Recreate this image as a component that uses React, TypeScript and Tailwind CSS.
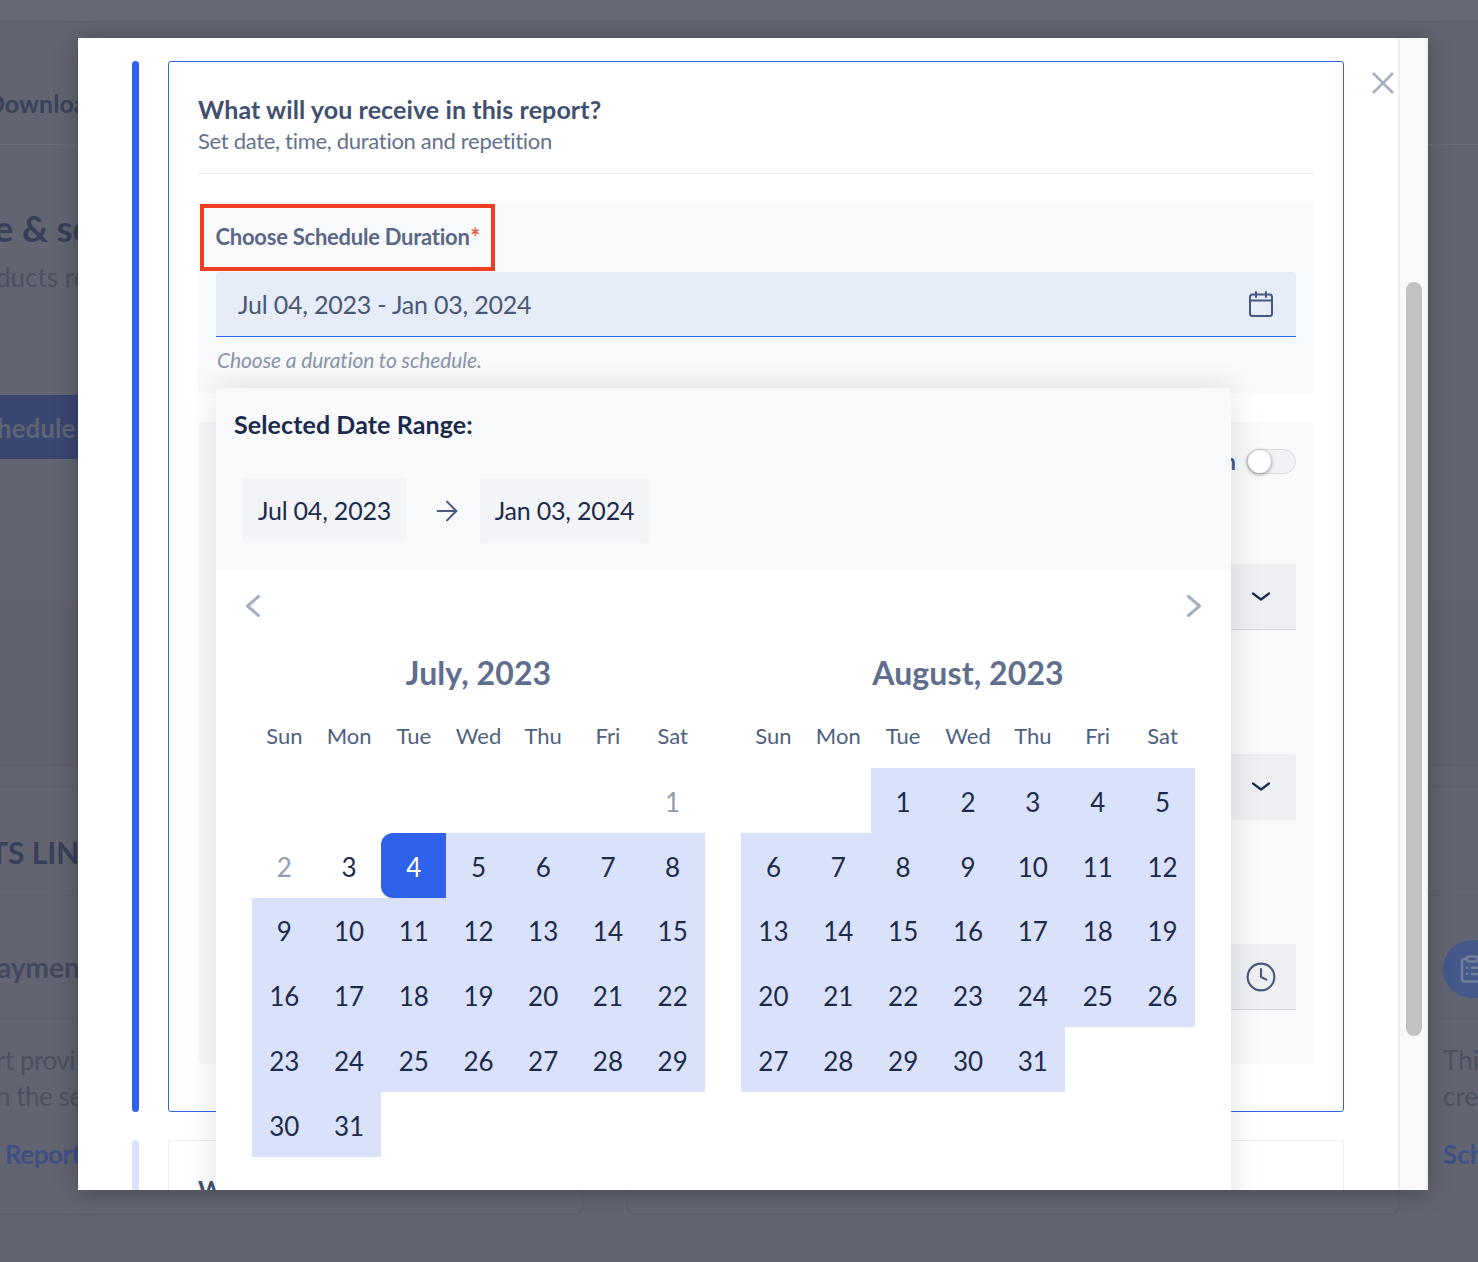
import { ArrowRight, ClipboardList, Clock } from "lucide-react";

const DAYS = ["Sun", "Mon", "Tue", "Wed", "Thu", "Fri", "Sat"];

type Month = { title: string; offset: number; length: number; rangeStart: number; mutedUntil: number };

const MONTHS: Month[] = [
  { title: "July, 2023", offset: 6, length: 31, rangeStart: 4, mutedUntil: 2 },
  { title: "August, 2023", offset: 2, length: 31, rangeStart: 1, mutedUntil: 0 },
];

function CalendarMonth({ month, isFirst }: { month: Month; isFirst: boolean }) {
  const cells: (number | null)[] = [
    ...Array.from({ length: month.offset }, () => null),
    ...Array.from({ length: month.length }, (_, i) => i + 1),
  ];
  return (
    <div>
      <div className="flex h-[66px] items-center justify-center text-[32px] font-bold tracking-[0.1px] text-[#5f6e8c]">{month.title}</div>
      <div className="grid h-[62px] grid-cols-7 items-center pb-[4px] text-center text-[22px] text-[#4f5f80]">
        {DAYS.map((d) => (
          <div key={d}>{d}</div>
        ))}
      </div>
      <div className="grid grid-cols-7 text-[26px] text-[#1d2b4b]">
        {cells.map((day, i) => {
          if (day === null) return <div key={i} className="h-[64.8px]" />;
          const isStart = isFirst && day === month.rangeStart;
          const inRange = day >= month.rangeStart;
          const muted = day <= month.mutedUntil;
          return (
            <div
              key={i}
              className={
                isStart
                  ? "flex h-[64.8px] items-center justify-center rounded-l-[12px] bg-[#2f62ea] pt-[4px] text-white"
                  : inRange
                    ? "flex h-[64.8px] items-center justify-center bg-[#dae2fb] pt-[4px]"
                    : muted
                      ? "flex h-[64.8px] items-center justify-center pt-[4px] text-[#929cae]"
                      : "flex h-[64.8px] items-center justify-center pt-[4px]"
              }
            >
              {day}
            </div>
          );
        })}
      </div>
    </div>
  );
}

function SelectRow({ icon, ruled }: { icon: "chevron" | "clock"; ruled: boolean }) {
  return (
    <div
      className={
        ruled
          ? "flex h-[66px] items-center justify-end rounded-t-[3px] border-b border-[#d3d6dd] bg-[#edeff3] pr-[23px]"
          : "flex h-[66px] items-center justify-end rounded-t-[3px] bg-[#edeff3] pr-[23px]"
      }
    >
      {icon === "chevron" ? (
        <svg width="24" height="24" viewBox="0 0 24 24" fill="none" stroke="#1d2b4b" strokeWidth="2.2" strokeLinecap="round" strokeLinejoin="round">
          <path d="M4 8.5 12 14.5 20 8.5" />
        </svg>
      ) : (
        <Clock size={32} strokeWidth={1.6} color="#4a5a7c" className="mr-[-4px]" />
      )}
    </div>
  );
}

export default function App() {
  return (
    <div className="relative h-[1262px] w-[1478px] overflow-hidden bg-[#626471] font-['Lato',sans-serif]">
      {/* Page behind the dialog */}
      <div className="h-[22px] border-b border-[#5c5f6b] bg-[#666976]" />
      <div className="h-[123px] border-b border-[#6a6c79] pt-[66px]">
        <div className="ml-[-14px] whitespace-nowrap text-[25px] leading-[30px] font-bold text-[#3a425c]">Download</div>
      </div>
      <div className="mt-[61px] ml-[-6px] whitespace-nowrap text-[36px] leading-[44px] font-bold text-[#373f5a]">e &amp; so</div>
      <div className="mt-[11px] ml-[-4px] whitespace-nowrap text-[26px] leading-[32px] text-[#4c505f]">ducts re</div>
      <div className="mt-[102px] flex h-[64px] w-[200px] items-center bg-[#3a4672] pt-[2px] text-[26px] font-bold text-[#5e6474]">
        <span className="ml-[-3px]">hedule</span>
      </div>
      <div className="mt-[143px] h-[164px] border-b border-[#5c5f6b] bg-[#60626f]" />
      <div className="h-[21px] border-b border-[#5c5f6b]" />
      <div className="h-[109px] border-b border-[#5c5f6b] pt-[45px]">
        <div className="ml-[-10px] whitespace-nowrap text-[30px] leading-[40px] font-bold text-[#373f5a]">TS LINK</div>
      </div>
      <div className="flex h-[319px] gap-[44px]">
        <div className="h-full w-[583px] shrink-0 rounded-br-[8px] border-r border-b border-[#5c5f6b]">
          <div className="h-[123px] border-b border-[#5c5f6b] pt-[53px]">
            <div className="ml-[-3px] whitespace-nowrap text-[28px] leading-[36px] font-bold text-[#42485e]">ayment</div>
          </div>
          <div className="mt-[23px] ml-[-4px] whitespace-nowrap text-[26px] leading-[36px] tracking-[-0.5px] text-[#4c505f]">
            <div>rt provi</div>
            <div>n the se</div>
          </div>
          <div className="mt-[22px] ml-[5px] whitespace-nowrap text-[26px] leading-[36px] font-bold tracking-[-0.5px] text-[#3f5086]">Report</div>
        </div>
        <div className="h-full w-[772px] shrink-0 rounded-b-[8px] border-x border-b border-[#5c5f6b]" />
        <div className="h-full flex-1">
          <div className="h-[123px] border-b border-[#5c5f6b] pt-[44px]">
            <div className="flex h-[58px] w-[58px] items-center justify-center rounded-full bg-[#44588a]">
              <ClipboardList size={30} color="#727e9c" />
            </div>
          </div>
          <div className="mt-[23px] whitespace-nowrap text-[26px] leading-[36px] text-[#4c505f]">
            <div>Thi</div>
            <div>cre</div>
          </div>
          <div className="mt-[22px] whitespace-nowrap text-[26px] leading-[36px] font-bold text-[#3f5086]">Sch</div>
        </div>
      </div>

      {/* Dialog */}
      <div className="absolute top-[38px] left-[78px] flex h-[1152px] w-[1350px] overflow-hidden bg-white shadow-[0_2px_22px_rgba(0,0,0,0.28)]">
        <div className="w-[1320px] shrink-0 pt-[23px] pl-[54px]">
          <div className="flex gap-[29px]">
            <div className="w-[7px] shrink-0 rounded-[4px] bg-[#2f62ea]" />
            <div className="relative h-[1051px] w-[1176px] shrink-0 rounded-[3px] border border-[#2f62ea] px-[29px] pt-[31px]">
              <div className="text-[25px] leading-[32px] font-bold tracking-[0.1px] text-[#42506f]">What will you receive in this report?</div>
              <div className="mt-[1px] text-[22px] leading-[30px] tracking-[-0.3px] text-[#66728b]">Set date, time, duration and repetition</div>
              <div className="mt-[17px] h-px bg-[#e9eaec]" />

              <div className="mt-[27px] h-[192px] rounded-[4px] bg-[#f8f9fb] px-[18px] pt-[24px]">
                <div className="ml-[-0.5px] text-[22px] leading-[24px] font-bold tracking-[-0.25px] text-[#5b6785]">
                  Choose Schedule Duration
                  <span className="relative top-[3px] text-[26px] leading-[0] font-normal text-[#e6492d]">*</span>
                </div>
                <div className="mt-[23px] flex h-[65px] items-center justify-between rounded-t-[3px] border-b border-[#2f62ea] bg-[#e6ecf8] pr-[22px] pl-[22px]">
                  <span className="pt-[2px] text-[25px] tracking-[-0.2px] text-[#4a5874]">Jul 04, 2023 - Jan 03, 2024</span>
                  <svg width="26" height="28" viewBox="0 0 26 28" fill="none" stroke="#46587f" strokeWidth="2" strokeLinecap="round" strokeLinejoin="round">
                    <rect x="2" y="4.5" width="22" height="21.5" rx="2.5" />
                    <path d="M2 10.5h22" />
                    <path d="M8 2v5M18 2v5" />
                  </svg>
                </div>
                <div className="mt-[11px] ml-[1px] text-[21px] leading-[24px] tracking-[-0.1px] text-[#8a94a8] italic">Choose a duration to schedule.</div>
              </div>

              <div className="mt-[29px] h-[642px] rounded-[4px] bg-[#f8f9fb] px-[18px] pt-[27px]">
                <div className="flex h-[25px] items-center justify-end gap-[10px]">
                  <span className="text-[22px] font-bold text-[#46587f]">n</span>
                  <div className="flex h-[25px] w-[50px] items-center rounded-full border border-[#d9dae0] bg-[#f1f2f5] pl-[1px]">
                    <div className="h-[23px] w-[23px] rounded-full bg-white shadow-[0_1px_4px_rgba(0,0,0,0.45)]" />
                  </div>
                </div>
                <div className="mt-[90px]">
                  <SelectRow icon="chevron" ruled />
                </div>
                <div className="mt-[124px]">
                  <SelectRow icon="chevron" ruled={false} />
                </div>
                <div className="mt-[124px]">
                  <SelectRow icon="clock" ruled />
                </div>
              </div>

              {/* Annotation round the label */}
              <div className="absolute top-[142px] left-[31px] h-[67px] w-[295px] border-4 border-[#ee3f22]" />

              {/* Date range popover */}
              <div className="absolute top-[326px] left-[47px] w-[1015px] overflow-hidden rounded-t-[4px] bg-white pb-[60px] shadow-[0_0_32px_rgba(0,0,0,0.12)]">
                <div className="h-[182px] bg-[#f8f9fb] pt-[19px]">
                  <div className="ml-[18px] text-[25px] leading-[34px] font-bold tracking-[0.1px] text-[#1b2a4a]">Selected Date Range:</div>
                  <div className="mt-[37px] ml-[27px] flex items-center">
                    <div className="flex h-[65px] w-[163px] items-center justify-center rounded-[4px] bg-[#f2f4f8] text-[25px] tracking-[-0.2px] text-[#1d2b4b]">Jul 04, 2023</div>
                    <div className="flex w-[74px] justify-center pl-[8px]">
                      <ArrowRight size={32} strokeWidth={1.5} color="#4a5a7c" />
                    </div>
                    <div className="flex h-[65px] w-[169px] items-center justify-center rounded-[4px] bg-[#f2f4f8] text-[25px] tracking-[-0.2px] text-[#1d2b4b]">Jan 03, 2024</div>
                  </div>
                </div>
                <div className="flex h-[70px] items-center justify-between px-[30px] pt-[2px]">
                  <svg width="14" height="22" viewBox="0 0 14 22" fill="none" stroke="#a7b0c0" strokeWidth="3" strokeLinecap="round" strokeLinejoin="round">
                    <path d="M12.5 1.5 1.5 11l11 9.5" />
                  </svg>
                  <svg width="14" height="22" viewBox="0 0 14 22" fill="none" stroke="#a7b0c0" strokeWidth="3" strokeLinecap="round" strokeLinejoin="round">
                    <path d="M1.5 1.5 12.5 11 1.5 20.5" />
                  </svg>
                </div>
                <div className="grid grid-cols-[453px_454px] gap-[36px] px-[36px]">
                  {MONTHS.map((m, i) => (
                    <CalendarMonth key={m.title} month={m} isFirst={i === 0} />
                  ))}
                </div>
              </div>
            </div>
            <button className="mt-[10px] ml-[-2px] h-[24px] w-[24px] shrink-0">
              <svg width="24" height="24" viewBox="0 0 24 24" fill="none" stroke="#a7b0c0" strokeWidth="2.6">
                <path d="M2 2l20 20M22 2 2 22" />
              </svg>
            </button>
          </div>
          <div className="mt-[28px] flex gap-[29px]">
            <div className="h-[200px] w-[7px] shrink-0 rounded-[4px] bg-[#dae2fb]" />
            <div className="h-[200px] w-[1176px] shrink-0 rounded-[3px] border border-[#eceded] px-[29px] pt-[32px]">
              <div className="text-[25px] leading-[32px] font-bold text-[#42506f]">W</div>
            </div>
          </div>
        </div>
        <div className="flex-1 border-x-2 border-[#efefef] bg-[#f9f9f9] pt-[244px] pr-[4px] pl-[6px]">
          <div className="h-[754px] w-[16px] rounded-full bg-[#c1c1c1]" />
        </div>
      </div>
    </div>
  );
}
